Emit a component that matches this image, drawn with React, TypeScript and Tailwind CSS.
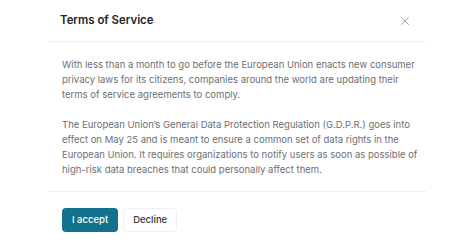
import { X } from "lucide-react";

export default function App() {
  return (
    <div className="min-h-[248px] bg-white" style={{ fontFamily: "Inter, 'Noto Sans', sans-serif" }}>
      <div className="mx-auto w-[378px] bg-white rounded-b">
        <div className="flex h-[42px] items-center justify-between border-b border-[#eceef1] pl-[12px] pr-[14px]">
          <h2 className="mt-[1px] text-[11.4px] font-semibold text-[#1f2329]">Terms of Service</h2>
          <button className="text-[#80858d]">
            <X size={14} strokeWidth={1.3} />
          </button>
        </div>
        <div className="border-b border-[#eceef1] pl-[14px] pr-[8px] pt-[15px] pb-[14px] text-[9.5px] leading-[15px] text-[#6b6f76]">
          <p>
            With less than a month to go before the European Union enacts new consumer privacy laws for its citizens,
            companies around the world are updating their terms of service agreements to comply.
          </p>
          <p className="mt-[15px]">
            The European Union&rsquo;s General Data Protection Regulation (G.D.P.R.) goes into effect on May 25 and is
            meant to ensure a common set of data rights in the European Union. It requires organizations to notify users
            as soon as possible of high-risk data breaches that could personally affect them.
          </p>
        </div>
        <div className="flex gap-[5px] px-[14px] pt-[16px] pb-[12px]">
          <button className="h-[24px] rounded-[4px] bg-[#12718c] px-[10px] text-[9.5px] font-medium text-white">
            I accept
          </button>
          <button className="h-[24px] rounded-[4px] border border-[#eceef1] bg-white px-[9px] text-[9.5px] font-medium text-[#33373d]">
            Decline
          </button>
        </div>
      </div>
    </div>
  );
}
